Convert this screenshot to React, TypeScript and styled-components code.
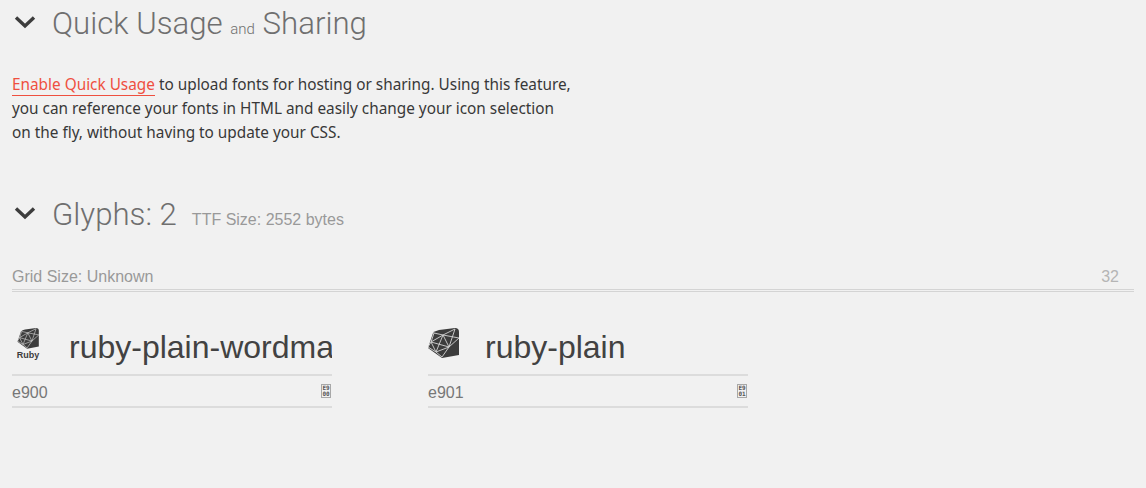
import React from "react";
import styled, { createGlobalStyle } from "styled-components";

const GlobalStyle = createGlobalStyle`
  html, body {
    margin: 0;
    padding: 0;
    background: #f1f1f1;
  }
  body {
    font-family: "Liberation Sans", Arial, sans-serif;
    overflow: hidden;
  }
`;

const Page = styled.div`
  width: 1146px;
  height: 488px;
  box-sizing: border-box;
  padding: 2px 12px 0;
  overflow: hidden;
`;

const SectionHead = styled.div<{ $top: number }>`
  display: flex;
  align-items: baseline;
  height: 44px;
  margin-top: ${(p) => p.$top}px;
  color: #777;
`;

const Chevron = styled.svg`
  width: 24px;
  height: 14px;
  margin-right: 15px;
  margin-left: 1px;
  margin-bottom: 4px;
  flex: none;
  align-self: center;
  color: #3d3d3d;
`;

const Title = styled.h1`
  margin: 0;
  font-family: Roboto, sans-serif;
  font-weight: 300;
  font-size: 31.2px;
  line-height: 44px;
  color: #6f6f6f;
`;

const Small = styled.small`
  font-size: 15px;
`;

const TitleNote = styled.span`
  margin-left: 15px;
  font-size: 16px;
  color: #999;
`;

const Intro = styled.p`
  margin: 26px 0 0;
  width: 570px;
  font-family: "Noto Sans", sans-serif;
  font-size: 15.35px;
  line-height: 24px;
  color: #383838;
`;

const EnableLink = styled.a`
  color: #ef4f3f;
  border-bottom: 1px solid #ef4f3f;
  padding-bottom: 1px;
`;

const GridBar = styled.div`
  display: flex;
  justify-content: space-between;
  margin-top: 30px;
  height: 25px;
  box-sizing: border-box;
  line-height: 20px;
  font-size: 16px;
  color: #999;
  border-bottom: 3px double #d4d4d4;
`;

const GridValue = styled.span`
  margin-right: 15px;
  color: #b5b5b5;
`;

const Cards = styled.div`
  display: flex;
  gap: 96px;
  margin-top: 30px;
`;

const Card = styled.div`
  width: 320px;
`;

const CardTop = styled.div`
  display: flex;
  align-items: center;
  height: 52px;
  border-bottom: 2px solid #dcdcdc;
`;

const IconBox = styled.div`
  width: 32px;
  height: 32px;
  flex: none;
  margin-right: 25px;
  margin-bottom: 8px;
`;

const GlyphName = styled.div`
  font-size: 32px;
  color: #424242;
  white-space: nowrap;
  overflow: hidden;
  width: 264px;
  line-height: 40px;
  margin-bottom: 2px;
`;

const CardBottom = styled.div`
  display: flex;
  align-items: center;
  justify-content: space-between;
  height: 32px;
  padding-top: 4px;
  box-sizing: border-box;
  border-bottom: 2px solid #dcdcdc;
  font-size: 16px;
  color: #777;
`;

const Tofu = styled.span`
  display: flex;
  flex-direction: column;
  align-items: center;
  justify-content: center;
  width: 10px;
  height: 14px;
  box-sizing: border-box;
  border: 1px solid #a8a8a8;
  margin-right: 1px;
  margin-top: -5px;
  font-family: "DejaVu Sans Mono", monospace;
  font-size: 6px;
  font-weight: 700;
  line-height: 6px;
  color: #555;
`;

const GEM_LINES =
  "M6 5 L3 14 L0 19 M6 5 L15 7 L27 1 M3 14 L15 7 L21 19 L14 29 M3 14 L8 24 L14 29 M0 19 L8 24 L21 19 L31 10 M15 7 L31 10 M27 1 L21 19 M8 24 L15 7 M3 14 L21 19";

const RubyGem = ({ x, y, w, h }: { x: number; y: number; w: number; h: number }) => (
  <svg x={x} y={y} width={w} height={h} viewBox="0 0 32 32">
    <path d="M5 5 Q7 3 11 2 L27 0 Q31 0 31 4 L31 27 L14 30 L0 20 Z" fill="#3c3c3c" />
    <path d={GEM_LINES} fill="none" stroke="#d4d4d4" strokeWidth="0.9" />
  </svg>
);

const WordmarkIcon = () => (
  <svg width="32" height="32" viewBox="0 0 32 32">
    <RubyGem x={5} y={0} w={23} h={22} />
    <text x="16" y="30" textAnchor="middle" fontFamily="Liberation Sans, sans-serif" fontWeight="700" fontSize="9" fill="#3c3c3c">
      Ruby
    </text>
  </svg>
);

const PlainIcon = () => (
  <svg width="32" height="32" viewBox="0 0 32 32">
    <RubyGem x={0} y={0} w={32} h={32} />
  </svg>
);

const ChevronIcon = () => (
  <Chevron viewBox="0 0 24 14">
    <path d="M3 2.5 L12 11 L21 2.5" fill="none" stroke="currentColor" strokeWidth="3.4" />
  </Chevron>
);

const glyphs = [
  { name: "ruby-plain-wordmark", code: "e900", hi: "E9", lo: "00", icon: <WordmarkIcon /> },
  { name: "ruby-plain", code: "e901", hi: "E9", lo: "01", icon: <PlainIcon /> },
];

const App: React.FC = () => (
  <Page>
    <GlobalStyle />
    <SectionHead $top={0}>
      <ChevronIcon />
      <Title>
        Quick Usage <Small>and</Small> Sharing
      </Title>
    </SectionHead>
    <Intro>
      <EnableLink>Enable Quick Usage</EnableLink> to upload fonts for hosting or sharing. Using this feature,
      <br />
      you can reference your fonts in HTML and easily change your icon selection
      <br />
      on the fly, without having to update your CSS.
    </Intro>
    <SectionHead $top={49}>
      <ChevronIcon />
      <Title>Glyphs: 2</Title>
      <TitleNote>TTF Size: 2552 bytes</TitleNote>
    </SectionHead>
    <GridBar>
      <span>Grid Size: Unknown</span>
      <GridValue>32</GridValue>
    </GridBar>
    <Cards>
      {glyphs.map((g) => (
        <Card key={g.code}>
          <CardTop>
            <IconBox>{g.icon}</IconBox>
            <GlyphName>{g.name}</GlyphName>
          </CardTop>
          <CardBottom>
            <span>{g.code}</span>
            <Tofu>
              <span>{g.hi}</span>
              <span>{g.lo}</span>
            </Tofu>
          </CardBottom>
        </Card>
      ))}
    </Cards>
  </Page>
);

export default App;
